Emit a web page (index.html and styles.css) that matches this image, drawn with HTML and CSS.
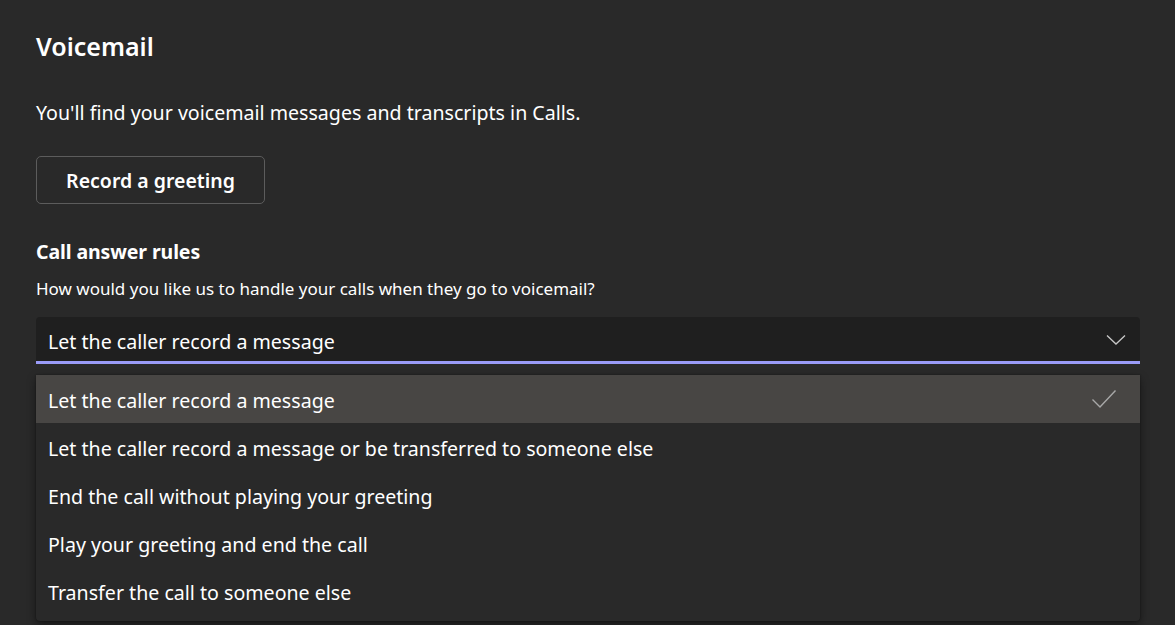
FILE: index.html
```html
<!DOCTYPE html>
<html>

<head>
    <meta charset="utf-8">
    <title>Voicemail</title>
    <link rel="stylesheet" href="styles.css">
</head>

<body>
    <main class="page">
        <h1>Voicemail</h1>
        <p class="intro">You'll find your voicemail messages and transcripts in Calls.</p>
        <button class="record_btn">Record a greeting</button>

        <h2>Call answer rules</h2>
        <p class="hint">How would you like us to handle your calls when they go to voicemail?</p>

        <div class="select_wrap">
            <div class="select">
                <span>Let the caller record a message</span>
                <svg class="chevron" width="20" height="12" viewBox="0 0 20 12">
                    <path d="M1 1.5 L10 10 L19 1.5" fill="none" stroke="#c8c8c8" stroke-width="1.3" />
                </svg>
            </div>

            <ul class="options">
                <li class="selected">
                    <span>Let the caller record a message</span>
                    <svg width="26" height="20" viewBox="0 0 26 20">
                        <path d="M1.5 10.5 L9 18 L24.5 1.5" fill="none" stroke="#a8a8a8" stroke-width="1.4" />
                    </svg>
                </li>
                <li>Let the caller record a message or be transferred to someone else</li>
                <li>End the call without playing your greeting</li>
                <li>Play your greeting and end the call</li>
                <li>Transfer the call to someone else</li>
            </ul>
        </div>

        <p class="behind">Play your greeting, then let the caller leave a message (or transfer the call) (optional)</p>
    </main>
</body>

</html>
```

FILE: styles.css
```css
/* vars */
:root {
    --bg: #292929;
    --text: #ffffff;
    --input-bg: #1f1f1f;
    --accent: #9a9bf7;
    --selected: #484644;
}

html {
    font-family: "Noto Sans", "Open Sans", sans-serif;
}

body {
    margin: 0;
    background-color: var(--bg);
    color: var(--text);
    height: 625px;
    overflow: hidden;
}

.page {
    padding: 29px 35px 0 36px;
}

h1 {
    margin: 0;
    font-size: 25px;
    line-height: 34px;
    font-weight: 600;
}

.intro {
    margin: 36px 0 0;
    font-size: 19.6px;
    line-height: 28px;
}

.record_btn {
    display: block;
    margin-top: 29px;
    width: 229px;
    height: 48px;
    background-color: var(--bg);
    color: var(--text);
    border: 1px solid #5c5c5c;
    border-radius: 5px;
    font-family: inherit;
    font-size: 19.5px;
    font-weight: 600;
    padding: 0;
}

h2 {
    margin: 34px 0 0;
    font-size: 19.5px;
    line-height: 28px;
    font-weight: 700;
    letter-spacing: -0.1px;
}

.hint {
    margin: 12px 0 0;
    font-size: 17px;
    line-height: 22px;
}

.select_wrap {
    position: relative;
    margin-top: 17px;
}

.select {
    display: flex;
    align-items: center;
    justify-content: space-between;
    box-sizing: border-box;
    height: 47px;
    padding: 4px 14px 0 12px;
    background-color: var(--input-bg);
    border-radius: 4px 4px 0 0;
    border-bottom: 3px solid var(--accent);
    font-size: 19.6px;
}

.chevron {
    margin-top: -2px;
}

.options {
    position: absolute;
    top: 58px;
    left: 0;
    right: 0;
    margin: 0;
    padding: 0 0 6px;
    list-style-type: none;
    background-color: var(--bg);
    border-radius: 0 0 4px 4px;
    box-shadow: 0 4px 10px rgba(0, 0, 0, 0.45), 0 0 2px rgba(0, 0, 0, 0.4);
    z-index: 2;
}

.options li {
    display: flex;
    align-items: center;
    justify-content: space-between;
    box-sizing: border-box;
    height: 48px;
    padding: 3px 23px 0 12px;
    font-size: 19.6px;
}

.options li.selected {
    background-color: var(--selected);
}

.options li svg {
    margin-top: -3px;
}

.behind {
    margin: 256px 0 0;
    font-size: 19.6px;
    color: #e0e0e0;
}
```
